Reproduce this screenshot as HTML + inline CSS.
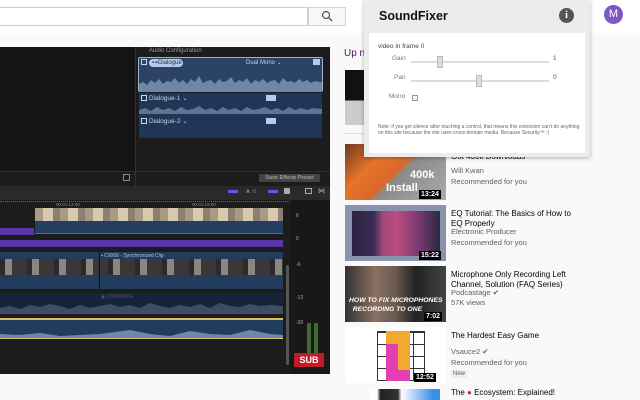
<!DOCTYPE html>
<html><head><meta charset="utf-8"><style>
*{margin:0;padding:0;box-sizing:border-box}
body{width:640px;height:400px;overflow:hidden;background:#f9f9f9;font-family:"Liberation Sans",sans-serif;position:relative}
.a{position:absolute}
.t{font-size:8px;color:#030303;line-height:10px}
.g{font-size:7.5px;color:#606060;line-height:10px}
.d{position:absolute;background:#000;color:#fff;font-size:7px;font-weight:bold;padding:0 2px;line-height:9px}
.wl{color:#c5d3e6;font-size:6px}
</style></head><body>
<!-- header -->
<div class="a" style="left:0;top:0;width:640px;height:33px;background:#fff"></div>
<div class="a" style="left:-2px;top:7px;width:310px;height:19px;border:1px solid #ccc;background:#fff"></div>
<div class="a" style="left:308px;top:7px;width:38px;height:19px;border:1px solid #d3d3d3;background:#f8f8f8"></div>
<svg class="a" style="left:321px;top:10px" width="12" height="12"><circle cx="5" cy="5" r="3.5" fill="none" stroke="#555" stroke-width="1.2"/><line x1="7.5" y1="7.5" x2="11" y2="11" stroke="#555" stroke-width="1.4"/></svg>
<div class="a" style="left:604px;top:5px;width:19px;height:19px;border-radius:50%;background:#7e57c2;color:#fff;font-size:11px;text-align:center;line-height:19px">M</div>

<!-- editor top -->
<div class="a" style="left:0;top:47px;width:330px;height:139px;background:#1c1c1c"></div>
<div class="a" style="left:0;top:47px;width:135px;height:125px;background:#141414"></div>
<div class="a" style="left:135px;top:47px;width:1px;height:139px;background:#333"></div>
<div class="a" style="left:149px;top:48px;font-size:6px;color:#999">Audio Configuration</div>
<div class="a" style="left:138px;top:57px;width:185px;height:35px;background:#2b4466;border:1px solid #9fb0c8;border-radius:2px"></div>
<div class="a" style="left:139px;top:93px;width:183px;height:45px;background:#1f3656"></div>
<svg class="a" style="left:139px;top:70px" width="183" height="22"><path d="M0 22 L0 14 L4 12 L8 15 L12 10 L16 13 L20 9 L24 14 L28 11 L32 12 L36 8 L40 13 L44 10 L48 14 L52 9 L56 12 L60 6 L64 13 L68 11 L72 10 L76 14 L80 9 L84 12 L88 11 L92 7 L96 13 L100 10 L104 12 L108 8 L112 14 L116 10 L120 12 L124 9 L128 13 L132 11 L136 10 L140 14 L144 8 L148 12 L152 11 L156 13 L160 9 L164 12 L168 10 L172 13 L176 11 L180 12 L183 12 L183 22Z" fill="#6e87a8"/></svg>
<svg class="a" style="left:139px;top:104px" width="183" height="10"><path d="M0 10 L0 6 L6 4 L12 7 L18 3 L24 6 L30 4 L36 7 L42 3 L48 6 L54 5 L60 2 L66 6 L72 4 L78 7 L84 3 L90 6 L96 4 L102 7 L108 3 L114 6 L120 5 L126 3 L132 6 L138 4 L144 7 L150 3 L156 6 L162 4 L168 6 L174 4 L183 5 L183 10Z" fill="#5c7596"/></svg>
<div class="a" style="left:141px;top:59px;width:6px;height:6px;border:1px solid #cdd8e8"></div>
<div class="a" style="left:149px;top:59px;width:34px;height:8px;border-radius:4px;background:#b8cbe6;font-size:6px;color:#234;line-height:8px;padding-left:3px">⊶Dialogue</div>
<div class="a wl" style="left:246px;top:59px">Dual Mono ⌄</div>
<div class="a" style="left:313px;top:59px;width:7px;height:6px;background:#b8cbe6"></div>
<div class="a" style="left:141px;top:95px;width:6px;height:6px;border:1px solid #cdd8e8"></div>
<div class="a wl" style="left:149px;top:94px;font-size:6.5px">Dialogue-1 ⌄</div>
<div class="a" style="left:266px;top:95px;width:10px;height:6px;background:#b8cbe6"></div>
<div class="a" style="left:141px;top:118px;width:6px;height:6px;border:1px solid #cdd8e8"></div>
<div class="a wl" style="left:149px;top:117px;font-size:6.5px">Dialogue-2 ⌄</div>
<div class="a" style="left:266px;top:118px;width:10px;height:6px;background:#b8cbe6"></div>
<div class="a" style="left:0;top:171px;width:330px;height:1px;background:#2e2e2e"></div>
<div class="a" style="left:259px;top:174px;width:61px;height:8px;background:#444;color:#bbb;font-size:5.5px;text-align:center;line-height:8px">Save Effects Preset</div>
<div class="a" style="left:123px;top:174px;width:7px;height:7px;border:1px solid #888"></div>
<!-- toolbar -->
<div class="a" style="left:0;top:186px;width:330px;height:14px;background:#2a2a2a"></div>
<div class="a" style="left:228px;top:190px;width:10px;height:3px;background:#5a5cf0"></div>
<div class="a" style="left:268px;top:190px;width:10px;height:3px;background:#5a5cf0"></div>
<div class="a" style="left:246px;top:188px;font-size:7px;color:#aaa">⩚ ∩</div>
<div class="a" style="left:284px;top:188px;width:6px;height:6px;background:#aaa;border-radius:1px"></div>
<div class="a" style="left:305px;top:188px;width:7px;height:6px;border:1px solid #aaa"></div>
<div class="a" style="left:318px;top:187px;font-size:7px;color:#aaa">⋈</div>
<!-- timeline -->
<div class="a" style="left:0;top:200px;width:330px;height:174px;background:#1c1c1c"></div>
<div class="a" style="left:0;top:201px;width:290px;height:1px;border-top:1px dotted #666"></div>
<div class="a" style="left:56px;top:202px;font-size:4.5px;color:#888">00:01:14:00</div>
<div class="a" style="left:192px;top:202px;font-size:4.5px;color:#888">00:01:16:00</div>
<div class="a" style="left:35px;top:208px;width:248px;height:13px;background:repeating-linear-gradient(90deg,#a89a84 0 8px,#d9c9ae 8px 18px,#8c8070 18px 25px)"></div>
<div class="a" style="left:35px;top:221px;width:248px;height:13px;background:#243e61;border-bottom:1px solid #3d6ea3"></div>
<div class="a" style="left:0;top:228px;width:34px;height:7px;background:#5b36a8"></div>
<div class="a" style="left:0;top:240px;width:283px;height:7px;background:#5b36a8"></div>
<div class="a" style="left:0;top:252px;width:283px;height:37px;background:#223c5e"></div>
<div class="a" style="left:0;top:259px;width:283px;height:16px;background:repeating-linear-gradient(90deg,#2a2a2a 0 5px,#8a8680 5px 12px,#3a3836 12px 27px)"></div>
<div class="a" style="left:99px;top:252px;width:1px;height:37px;background:#111"></div>
<div class="a" style="left:101px;top:253px;font-size:5px;color:#aac4e6">▪ C0006 - Synchronized Clip</div>
<div class="a" style="left:0;top:293px;width:283px;height:21px;background:#16243a"></div>
<svg class="a" style="left:0;top:300px" width="283" height="14"><path d="M0 14 L0 8 L10 6 L20 9 L30 5 L40 7 L50 4 L60 6 L70 9 L80 5 L90 8 L100 6 L110 4 L120 7 L130 5 L140 8 L150 3 L160 6 L170 8 L180 5 L190 7 L200 4 L210 8 L220 3 L230 6 L240 7 L250 4 L260 6 L270 5 L283 6 L283 14Z" fill="#3c4d64"/></svg>
<div class="a" style="left:101px;top:294px;font-size:5px;color:#556">◉ ZOOM0004</div>
<div class="a" style="left:0;top:318px;width:283px;height:2px;background:#d9c25a"></div>
<div class="a" style="left:0;top:320px;width:283px;height:18px;background:#223c5e"></div>
<svg class="a" style="left:0;top:328px" width="283" height="10"><path d="M0 10 L0 6 L20 7 L40 5 L60 8 L80 7 L100 6 L130 2 L150 6 L170 8 L190 3 L210 6 L230 7 L250 2 L270 6 L283 7 L283 10Z" fill="#6a88b0"/></svg>
<div class="a" style="left:0;top:338px;width:283px;height:1px;background:#d9c25a"></div>
<div class="a" style="left:286px;top:265px;width:3px;height:100px;background:#555;border-radius:2px"></div>
<div class="a" style="left:290px;top:200px;width:40px;height:174px;background:#181818"></div>
<div class="a" style="left:296px;top:320px;font-size:5px;color:#aaa">-30</div>
<div class="a" style="left:296px;top:295px;font-size:5px;color:#aaa">-12</div>
<div class="a" style="left:296px;top:262px;font-size:5px;color:#aaa">-6</div>
<div class="a" style="left:296px;top:236px;font-size:5px;color:#aaa">0</div>
<div class="a" style="left:296px;top:213px;font-size:5px;color:#aaa">6</div>
<div class="a" style="left:307px;top:323px;width:4px;height:30px;background:#3f6a36"></div>
<div class="a" style="left:314px;top:323px;width:4px;height:30px;background:#3f6a36"></div>
<div class="a" style="left:294px;top:353px;width:30px;height:14px;background:#c01c28;color:#fff;font-weight:bold;font-size:9px;text-align:center;line-height:14px">SUB</div>

<!-- right column -->
<div class="a" style="left:344px;top:48px;font-size:10px;color:#5a0e6e">Up n</div>
<div class="a" style="left:345px;top:70px;width:20px;height:55px;background:linear-gradient(#111 0 55%,#ccc 55%)"></div>
<div class="a" style="left:345px;top:133px;width:20px;height:1px;background:#ddd"></div>

<div class="a" style="left:345px;top:144px;width:101px;height:56px;background:linear-gradient(135deg,#6a3a20 0,#e8742a 30%,#d9682a 50%,#8b8b8b 55%,#aaa 100%)"></div>
<div class="a" style="left:410px;top:169px;color:#fff;font-size:11px;font-weight:bold">400k</div>
<div class="a" style="left:386px;top:182px;color:#fff;font-size:11px;font-weight:bold">Install</div>
<div class="d" style="left:419px;top:190px">13:24</div>
<div class="a t" style="left:451px;top:152px;width:140px">Got 400k Downloads</div>
<div class="a g" style="left:451px;top:166px">Will Kwan</div>
<div class="a g" style="left:451px;top:177px">Recommended for you</div>

<div class="a" style="left:345px;top:205px;width:101px;height:56px;background:#8894ab"></div>
<div class="a" style="left:352px;top:211px;width:88px;height:45px;background:linear-gradient(90deg,#2a2440 0,#3a2d55 25%,#a0487a 35%,#c04c80 50%,#7a3a70 75%,#2a2a40 100%)"></div>
<div class="d" style="left:419px;top:251px">15:22</div>
<div class="a t" style="left:451px;top:209px;width:130px">EQ Tutorial: The Basics of How to EQ Properly</div>
<div class="a g" style="left:451px;top:227px">Electronic Producer</div>
<div class="a g" style="left:451px;top:238px">Recommended for you</div>

<div class="a" style="left:345px;top:266px;width:101px;height:56px;overflow:hidden;background:linear-gradient(90deg,#333 0,#8a7060 30%,#6b5a50 50%,#222 70%,#444 100%)">
<div class="a" style="left:4px;top:30px;color:#fff;font-size:6.8px;font-weight:bold;font-style:italic;line-height:9px;white-space:nowrap">HOW TO FIX MICROPHONES<br>&nbsp;&nbsp;RECORDING TO ONE</div></div>
<div class="d" style="left:424px;top:312px">7:02</div>
<div class="a t" style="left:451px;top:270px;width:140px">Microphone Only Recording Left Channel, Solution (FAQ Series)</div>
<div class="a g" style="left:451px;top:288px">Podcastage ✔</div>
<div class="a g" style="left:451px;top:298px">57K views</div>

<div class="a" style="left:345px;top:327px;width:101px;height:56px;background:#fff"></div>
<div class="a" style="left:377px;top:331px;width:48px;height:50px;border:1px solid #333;background:repeating-linear-gradient(90deg,transparent 0 11px,#333 11px 12px),repeating-linear-gradient(0deg,transparent 0 11px,#333 11px 12px)"></div>
<div class="a" style="left:386px;top:331px;width:12px;height:50px;background:#e040b0"></div>
<div class="a" style="left:386px;top:331px;width:24px;height:13px;background:#f5a830"></div>
<div class="a" style="left:398px;top:344px;width:12px;height:26px;background:#f5a830"></div>
<div class="a" style="left:386px;top:370px;width:24px;height:11px;background:#e040b0"></div>
<div class="d" style="left:414px;top:373px">12:52</div>
<div class="a t" style="left:451px;top:331px">The Hardest Easy Game</div>
<div class="a g" style="left:451px;top:347px">Vsauce2 ✔</div>
<div class="a g" style="left:451px;top:358px">Recommended for you</div>
<div class="a" style="left:451px;top:370px;background:#eee;color:#606060;font-size:6px;padding:0 2px;line-height:8px">New</div>
<div class="a t" style="left:451px;top:388px">The <span style="color:#d22">●</span> Ecosystem: Explained!</div>
<div class="a" style="left:370px;top:389px;width:70px;height:11px;background:linear-gradient(90deg,#fff 0,#fff 10%,#222 15%,#333 40%,#fff 45%,#3a8ee8 90%)"></div>

<!-- popup -->
<div class="a" style="left:364px;top:0;width:226px;height:157px;background:#ececec;box-shadow:0 1px 4px rgba(0,0,0,.3)"></div>
<div class="a" style="left:379px;top:9px;font-size:12.5px;font-weight:bold;color:#111">SoundFixer</div>
<div class="a" style="left:559px;top:8px;width:15px;height:15px;border-radius:50%;background:#555;color:#fff;font-size:10px;font-weight:bold;text-align:center;line-height:15px;font-family:'Liberation Serif',serif">i</div>
<div class="a" style="left:369px;top:33px;width:216px;height:120px;background:#fff"></div>
<div class="a" style="left:378px;top:43px;font-size:6.5px;color:#444">video in frame 0</div>
<div class="a" style="left:392px;top:55px;font-size:6.5px;color:#777">Gain</div>
<div class="a" style="left:411px;top:61px;width:138px;height:2px;background:#e2dcd8"></div>
<div class="a" style="left:437px;top:56px;width:6px;height:12px;background:#ddd;border:1px solid #bbb"></div>
<div class="a" style="left:553px;top:55px;font-size:6.5px;color:#555">1</div>
<div class="a" style="left:394px;top:74px;font-size:6.5px;color:#777">Pan</div>
<div class="a" style="left:411px;top:80px;width:138px;height:2px;background:#e2dcd8"></div>
<div class="a" style="left:476px;top:75px;width:6px;height:12px;background:#ddd;border:1px solid #bbb"></div>
<div class="a" style="left:553px;top:74px;font-size:6.5px;color:#555">0</div>
<div class="a" style="left:389px;top:93px;font-size:6.5px;color:#777">Mono</div>
<div class="a" style="left:412px;top:95px;width:6px;height:6px;border:1px solid #999;background:#f4f4f4"></div>
<div class="a" style="left:378px;top:125px;width:205px;font-size:5px;line-height:5.5px;color:#666">Note: if you get silence after touching a control, that means this extension can't do anything on this site because the site uses cross-domain media. Because Security™ :(</div>
</body></html>
